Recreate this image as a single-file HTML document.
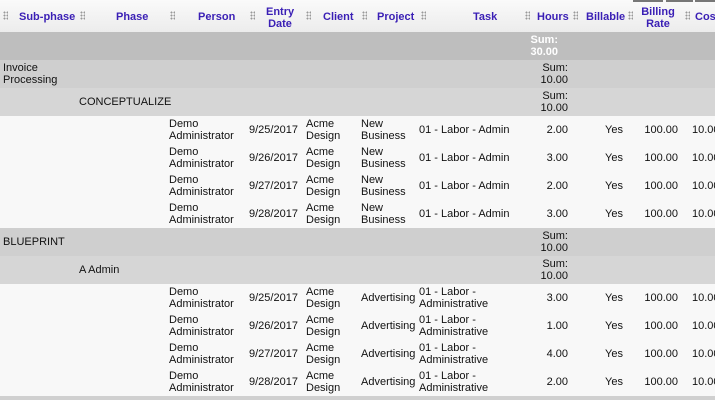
<!DOCTYPE html>
<html><head><meta charset="utf-8"><style>
*{margin:0;padding:0;box-sizing:border-box}
body{width:715px;height:400px;overflow:hidden;background:#d0d0d0;font-family:"Liberation Sans",Arial,sans-serif;font-size:11px;color:#111;position:relative}
.hdr{position:absolute;left:0;top:0;width:715px;height:32px;background:linear-gradient(#fafafa,#ececec)}
.hl{position:absolute;color:#3a1fb5;font-weight:bold;font-size:11px;line-height:12px;text-align:center}
.g{position:absolute;top:11px;width:5px;height:9px;background-image:radial-gradient(circle,#999 0.9px,transparent 1.1px);background-size:3px 3px}
.row{position:absolute;left:0;width:715px;height:28px}
.c{position:absolute;top:0;height:28px;display:flex;align-items:center;line-height:12px}
.r{justify-content:flex-end}
.bar{position:absolute;top:0;height:2px;background:#777}
</style></head><body>
<div class="hdr">
<div class="bar" style="left:633px;width:30px"></div><div class="bar" style="left:666px;width:27px"></div><div class="bar" style="left:695px;width:20px"></div>
<div class="g" style="left:3px"></div><div class="hl" style="left:19px;top:11px">Sub-phase</div>
<div class="g" style="left:80px"></div><div class="hl" style="left:116px;top:11px">Phase</div>
<div class="g" style="left:170px"></div><div class="hl" style="left:198px;top:11px">Person</div>
<div class="g" style="left:250px"></div><div class="hl" style="left:266px;top:6px;width:28px">Entry<br>Date</div>
<div class="g" style="left:306px"></div><div class="hl" style="left:323px;top:11px">Client</div>
<div class="g" style="left:362px"></div><div class="hl" style="left:377px;top:11px">Project</div>
<div class="g" style="left:421px"></div><div class="hl" style="left:473px;top:11px">Task</div>
<div class="g" style="left:525px"></div><div class="hl" style="left:537px;top:11px">Hours</div>
<div class="g" style="left:573px"></div><div class="hl" style="left:586px;top:11px">Billable</div>
<div class="g" style="left:628px"></div><div class="hl" style="left:641px;top:6px;width:34px">Billing<br>Rate</div>
<div class="g" style="left:685px"></div><div class="hl" style="left:695px;top:11px">Cost</div>
</div>

<div class="row" style="top:32px;background:#bebebe"><div class="c r" style="left:500px;width:58px;color:#fff;font-weight:bold;text-align:right">Sum:<br>30.00</div></div>

<div class="row" style="top:60px;background:#cfcfcf"><div class="c" style="left:3px">Invoice<br>Processing</div><div class="c r" style="left:500px;width:68px;text-align:right">Sum:<br>10.00</div></div>
<div class="row" style="top:88px;background:#d6d6d6"><div class="c" style="left:79px">CONCEPTUALIZE</div><div class="c r" style="left:500px;width:68px;text-align:right">Sum:<br>10.00</div></div>

<div class="row" style="top:116px;background:#f8f8f8"><div class="c" style="left:169px">Demo<br>Administrator</div><div class="c" style="left:249px">9/25/2017</div><div class="c" style="left:306px">Acme<br>Design</div><div class="c" style="left:361px">New<br>Business</div><div class="c" style="left:419px">01 - Labor - Admin</div><div class="c r" style="left:515px;width:53px">2.00</div><div class="c" style="left:605px">Yes</div><div class="c r" style="left:630px;width:48px">100.00</div><div class="c" style="left:692px">10.00</div></div>
<div class="row" style="top:144px;background:#f8f8f8"><div class="c" style="left:169px">Demo<br>Administrator</div><div class="c" style="left:249px">9/26/2017</div><div class="c" style="left:306px">Acme<br>Design</div><div class="c" style="left:361px">New<br>Business</div><div class="c" style="left:419px">01 - Labor - Admin</div><div class="c r" style="left:515px;width:53px">3.00</div><div class="c" style="left:605px">Yes</div><div class="c r" style="left:630px;width:48px">100.00</div><div class="c" style="left:692px">10.00</div></div>
<div class="row" style="top:172px;background:#f8f8f8"><div class="c" style="left:169px">Demo<br>Administrator</div><div class="c" style="left:249px">9/27/2017</div><div class="c" style="left:306px">Acme<br>Design</div><div class="c" style="left:361px">New<br>Business</div><div class="c" style="left:419px">01 - Labor - Admin</div><div class="c r" style="left:515px;width:53px">2.00</div><div class="c" style="left:605px">Yes</div><div class="c r" style="left:630px;width:48px">100.00</div><div class="c" style="left:692px">10.00</div></div>
<div class="row" style="top:200px;background:#f8f8f8"><div class="c" style="left:169px">Demo<br>Administrator</div><div class="c" style="left:249px">9/28/2017</div><div class="c" style="left:306px">Acme<br>Design</div><div class="c" style="left:361px">New<br>Business</div><div class="c" style="left:419px">01 - Labor - Admin</div><div class="c r" style="left:515px;width:53px">3.00</div><div class="c" style="left:605px">Yes</div><div class="c r" style="left:630px;width:48px">100.00</div><div class="c" style="left:692px">10.00</div></div>

<div class="row" style="top:228px;background:#cfcfcf"><div class="c" style="left:3px">BLUEPRINT</div><div class="c r" style="left:500px;width:68px;text-align:right">Sum:<br>10.00</div></div>
<div class="row" style="top:256px;background:#d6d6d6"><div class="c" style="left:79px">A Admin</div><div class="c r" style="left:500px;width:68px;text-align:right">Sum:<br>10.00</div></div>

<div class="row" style="top:284px;background:#f8f8f8"><div class="c" style="left:169px">Demo<br>Administrator</div><div class="c" style="left:249px">9/25/2017</div><div class="c" style="left:306px">Acme<br>Design</div><div class="c" style="left:361px">Advertising</div><div class="c" style="left:419px">01 - Labor -<br>Administrative</div><div class="c r" style="left:515px;width:53px">3.00</div><div class="c" style="left:605px">Yes</div><div class="c r" style="left:630px;width:48px">100.00</div><div class="c" style="left:692px">10.00</div></div>
<div class="row" style="top:312px;background:#f8f8f8"><div class="c" style="left:169px">Demo<br>Administrator</div><div class="c" style="left:249px">9/26/2017</div><div class="c" style="left:306px">Acme<br>Design</div><div class="c" style="left:361px">Advertising</div><div class="c" style="left:419px">01 - Labor -<br>Administrative</div><div class="c r" style="left:515px;width:53px">1.00</div><div class="c" style="left:605px">Yes</div><div class="c r" style="left:630px;width:48px">100.00</div><div class="c" style="left:692px">10.00</div></div>
<div class="row" style="top:340px;background:#f8f8f8"><div class="c" style="left:169px">Demo<br>Administrator</div><div class="c" style="left:249px">9/27/2017</div><div class="c" style="left:306px">Acme<br>Design</div><div class="c" style="left:361px">Advertising</div><div class="c" style="left:419px">01 - Labor -<br>Administrative</div><div class="c r" style="left:515px;width:53px">4.00</div><div class="c" style="left:605px">Yes</div><div class="c r" style="left:630px;width:48px">100.00</div><div class="c" style="left:692px">10.00</div></div>
<div class="row" style="top:368px;background:#f8f8f8"><div class="c" style="left:169px">Demo<br>Administrator</div><div class="c" style="left:249px">9/28/2017</div><div class="c" style="left:306px">Acme<br>Design</div><div class="c" style="left:361px">Advertising</div><div class="c" style="left:419px">01 - Labor -<br>Administrative</div><div class="c r" style="left:515px;width:53px">2.00</div><div class="c" style="left:605px">Yes</div><div class="c r" style="left:630px;width:48px">100.00</div><div class="c" style="left:692px">10.00</div></div>
</body></html>
